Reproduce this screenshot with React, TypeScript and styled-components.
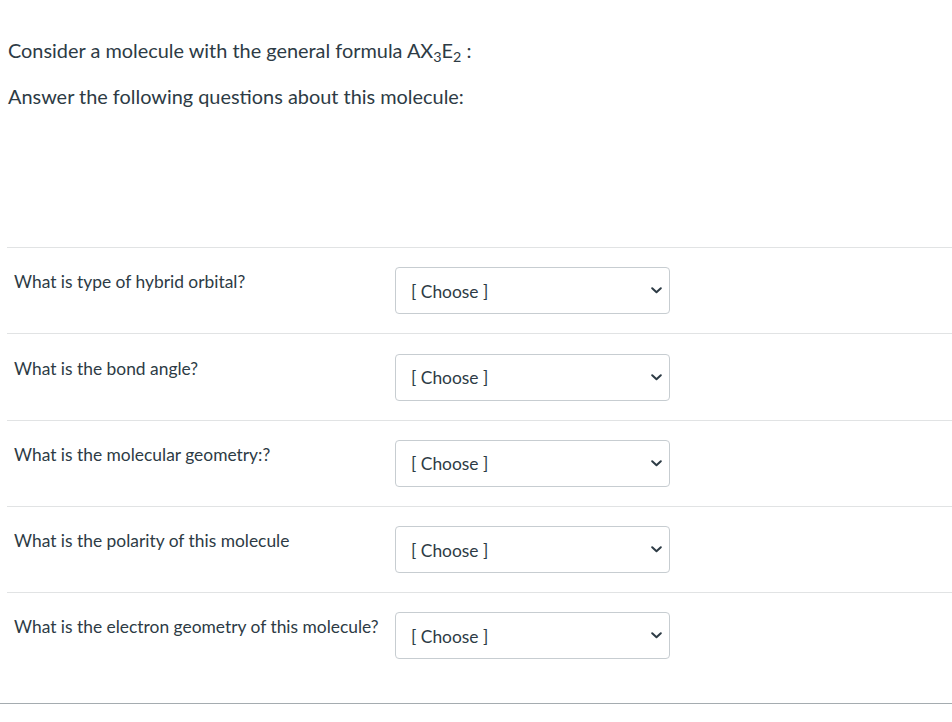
import React from "react";
import styled, { createGlobalStyle } from "styled-components";

const GlobalStyle = createGlobalStyle`
  html, body {
    margin: 0;
    padding: 0;
    background: #fff;
  }
  body {
    font-family: Lato, "Noto Sans", "Liberation Sans", sans-serif;
    color: #2d3b45;
  }
`;

const Page = styled.div`
  width: 952px;
  overflow: hidden;
`;

const Intro = styled.div`
  padding: 37px 0 0 8px;
  height: 247px;
  box-sizing: border-box;
`;

const IntroText = styled.p`
  margin: 0 0 19px;
  font-size: 19.9px;
  line-height: 27px;

  sub {
    font-size: 0.72em;
    line-height: 0;
    vertical-align: -0.25em;
  }
`;

const QuestionList = styled.div`
  border-bottom: 1px solid #a5acb0;
  padding-left: 7px;
  padding-bottom: 25px;
`;

const QuestionRow = styled.div`
  display: grid;
  grid-template-columns: 381px 275px;
  align-items: start;
  padding: 19.25px 0 19px 7px;
  border-top: 1px solid #e1e3e4;
`;

const Label = styled.div`
  font-size: 17.4px;
  line-height: 24px;
  margin-top: 3px;
  white-space: nowrap;
`;

const SelectBox = styled.div`
  height: 47px;
  box-sizing: border-box;
  border: 1px solid #c7cdd1;
  border-radius: 4px;
  display: flex;
  align-items: center;
  padding: 0 15px;
  font-size: 17.4px;
  background: #fff;
  cursor: pointer;
`;

const SelectText = styled.span`
  flex: 1;
  margin-top: 1px;
`;

const Chevron = () => (
  <svg width="11" height="7" viewBox="0 0 11 7" style={{ marginRight: -8 }}>
    <polyline
      points="1.2,1.2 5.5,5.2 9.8,1.2"
      fill="none"
      stroke="#2d3b45"
      strokeWidth="2"
      strokeLinecap="round"
      strokeLinejoin="round"
    />
  </svg>
);

const questions = [
  "What is type of hybrid orbital?",
  "What is the bond angle?",
  "What is the molecular geometry:?",
  "What is the polarity of this molecule",
  "What is the electron geometry of this molecule?",
];

export default function App() {
  return (
    <Page>
      <GlobalStyle />
      <Intro>
        <IntroText>
          Consider a molecule with the general formula AX<sub>3</sub>E
          <sub>2</sub> :
        </IntroText>
        <IntroText>Answer the following questions about this molecule:</IntroText>
      </Intro>
      <QuestionList>
        {questions.map((q) => (
          <QuestionRow key={q}>
            <Label>{q}</Label>
            <SelectBox>
              <SelectText>[ Choose ]</SelectText>
              <Chevron />
            </SelectBox>
          </QuestionRow>
        ))}
      </QuestionList>
    </Page>
  );
}
